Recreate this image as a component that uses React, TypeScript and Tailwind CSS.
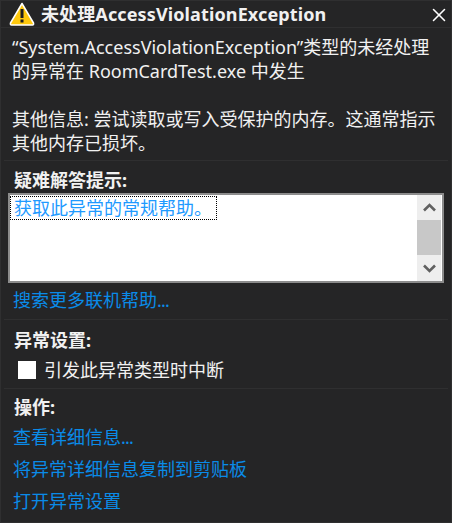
import { X } from 'lucide-react';

const FONT = "font-['Noto_Sans','Noto_Sans_CJK_SC',sans-serif]";

function Arrow({ down }: { down?: boolean }) {
  return (
    <svg width="13" height="9" viewBox="0 0 13 9">
      <polyline points={down ? '1,1.5 6.5,7 12,1.5' : '1,7.5 6.5,2 12,7.5'} fill="none" stroke="#606060" strokeWidth="2.6" />
    </svg>
  );
}

export default function App() {
  return (
    <div className={`w-[452px] h-[523px] flex flex-col bg-[#252526] border border-[#2f2f30] text-[18px] leading-[24px] text-[#f1f1f1] overflow-hidden ${FONT}`}>
      {/* Title bar */}
      <div className="h-[27px] shrink-0 flex items-center pl-[8px] pr-[1px] border-b border-[#2f2f30]">
        <svg width="26" height="24" viewBox="0 0 26 24" className="shrink-0">
          <path d="M13 1.5 L24.5 21 Q25 23 23.5 23 L2.5 23 Q1 23 1.5 21 Z" fill="#ffc90e" stroke="#ffffff" strokeWidth="1.5" strokeLinejoin="round" />
          <rect x="11.5" y="7" width="3" height="9" fill="#1e1e1e" />
          <rect x="11.5" y="17.5" width="3" height="3" fill="#1e1e1e" />
        </svg>
        <span className="ml-[6px] font-bold whitespace-nowrap tracking-[0.12px]">未处理AccessViolationException</span>
        <X size={22} strokeWidth={1.7} className="ml-auto mt-[2px] text-white" />
      </div>

      {/* Message */}
      <div className="h-[133px] shrink-0 mx-[3px] pl-[8px] pt-[7px] border-b border-[#2f2f30]">
        <p className="whitespace-nowrap">“System.AccessViolationException”类型的未经处理</p>
        <p className="whitespace-nowrap">的异常在 RoomCardTest.exe 中发生</p>
        <p className="h-[24px]" />
        <p className="whitespace-nowrap">其他信息: 尝试读取或写入受保护的内存。这通常指示</p>
        <p className="whitespace-nowrap">其他内存已损坏。</p>
      </div>

      {/* Troubleshooting tips */}
      <div className="h-[159px] shrink-0 mx-[3px] border-b border-[#2f2f30] flex flex-col">
        <div className="pl-[10px] pt-[7px] font-bold">疑难解答提示:</div>
        <div className="mt-[1px] mx-[4px] h-[90px] flex border-2 border-[#8c8c8c] bg-white">
          <div className="flex-1 pt-[1px]">
            <span className="inline-block h-[24px] px-[3px] pr-[4px] leading-[23px] border border-dotted border-black text-[#1e9aff]">获取此异常的常规帮助。</span>
          </div>
          <div className="w-[24px] flex flex-col items-center bg-[#eeeeee] mr-[1px]">
            <div className="h-[25px] flex items-center justify-center"><Arrow /></div>
            <div className="h-[35px] w-full bg-[#c8c8c8]" />
            <div className="flex-1 flex items-center justify-center"><Arrow down /></div>
          </div>
        </div>
        <a className="pl-[9px] mt-[5px] text-[#0a8be8]">搜索更多联机帮助<span className="tracking-[-0.8px]">...</span></a>
      </div>

      {/* Exception settings */}
      <div className="h-[69px] shrink-0 mx-[3px] border-b border-[#2f2f30]">
        <div className="pl-[10px] pt-[8px] font-bold">异常设置:</div>
        <label className="mt-[6px] pl-[14px] flex items-center gap-[8px]">
          <span className="w-[18px] h-[18px] bg-white shrink-0" />
          <span>引发此异常类型时中断</span>
        </label>
      </div>

      {/* Actions */}
      <div className="mx-[3px] flex flex-col">
        <div className="pl-[10px] pt-[6px] font-bold">操作:</div>
        <div className="pl-[9px] flex flex-col gap-[8px] mt-[6px] text-[#0a8be8]">
          <a>查看详细信息<span className="tracking-[-0.8px]">...</span></a>
          <a>将异常详细信息复制到剪贴板</a>
          <a>打开异常设置</a>
        </div>
      </div>
    </div>
  );
}
